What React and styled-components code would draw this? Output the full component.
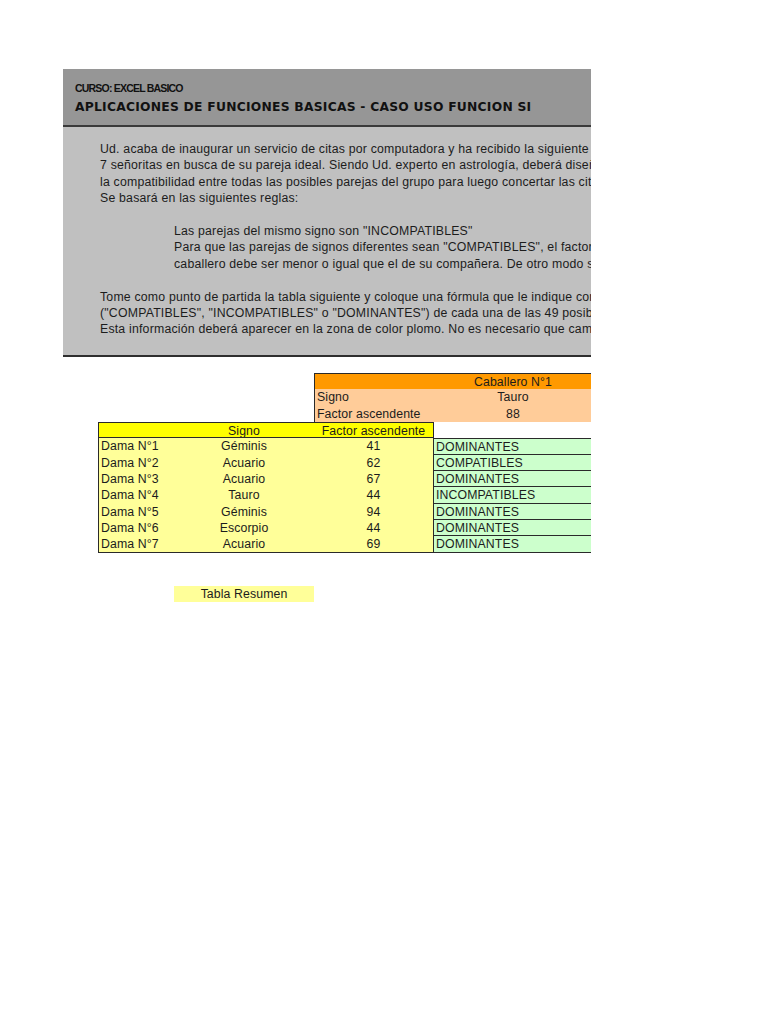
import React from "react";
import styled, { createGlobalStyle } from "styled-components";

const GlobalStyle = createGlobalStyle`
  html, body {
    margin: 0;
    padding: 0;
    background: #ffffff;
  }
  body {
    font-family: "Liberation Sans", Arial, sans-serif;
    color: #1c1c1c;
  }
`;

const Page = styled.div`
  padding: 69px 0 0 63px;
  min-height: 1024px;
  box-sizing: border-box;
`;

const Sheet = styled.div`
  width: 528px;
  overflow: hidden;
`;

const Banner = styled.header`
  background: #969696;
  height: 58px;
  padding: 12px 0 0 12px;
  box-sizing: border-box;
  border-bottom: 2px solid #3a3a3a;
`;

const Course = styled.div`
  font-family: "Liberation Sans Narrow", "Liberation Sans", Arial, sans-serif;
  font-weight: bold;
  font-size: 10.5px;
  letter-spacing: -0.8px;
  line-height: 14px;
  color: #111;
`;

const Title = styled.h1`
  margin: 4px 0 0;
  font-family: "DejaVu Sans", Verdana, sans-serif;
  font-weight: bold;
  font-size: 12.3px;
  letter-spacing: 0.25px;
  line-height: 16px;
  color: #111;
  white-space: nowrap;
`;

const Brief = styled.section`
  background: #c0c0c0;
  height: 230px;
  padding: 14px 0 0 37px;
  box-sizing: border-box;
  border-bottom: 2px solid #2e2e2e;
  font-size: 12.3px;
  letter-spacing: 0.2px;
  line-height: 16.4px;
  white-space: nowrap;
`;

const Para = styled.p`
  margin: 0 0 16.4px;
  padding-left: ${({ $indent }) => ($indent ? "74px" : "0")};
`;

const Grid = styled.div`
  display: grid;
  grid-template-columns: 76px 140px 120px 158px;
  grid-auto-rows: 16.35px;
  margin: 16px 0 0 35px;
  font-size: 12.3px;
  letter-spacing: 0.1px;
  line-height: 16px;
`;

const Cell = styled.div`
  grid-column: ${({ $col }) => $col || "auto"};
  background: ${({ $bg }) => $bg || "transparent"};
  text-align: ${({ $align }) => $align || "center"};
  padding-left: ${({ $align }) => ($align === "left" ? "2px" : "0")};
  border-left: ${({ $bl }) => ($bl ? "1px solid #2a2a2a" : "none")};
  border-right: ${({ $br }) => ($br ? "1px solid #2a2a2a" : "none")};
  border-top: ${({ $bt }) => ($bt ? "1px solid #2a2a2a" : "none")};
  border-bottom: ${({ $bb }) => ($bb ? "1px solid #2a2a2a" : "none")};
  box-sizing: border-box;
  white-space: nowrap;
  overflow: hidden;
`;

const Summary = styled.div`
  margin: 33px 0 0 111px;
  width: 140px;
  height: 16px;
  background: #ffff99;
  text-align: center;
  font-size: 12.3px;
  letter-spacing: 0.1px;
  line-height: 17px;
`;

const ladies = [
  ["Dama N°1", "Géminis", 41, "DOMINANTES"],
  ["Dama N°2", "Acuario", 62, "COMPATIBLES"],
  ["Dama N°3", "Acuario", 67, "DOMINANTES"],
  ["Dama N°4", "Tauro", 44, "INCOMPATIBLES"],
  ["Dama N°5", "Géminis", 94, "DOMINANTES"],
  ["Dama N°6", "Escorpio", 44, "DOMINANTES"],
  ["Dama N°7", "Acuario", 69, "DOMINANTES"],
];

export default function App() {
  const last = ladies.length - 1;
  return (
    <>
      <GlobalStyle />
      <Page>
        <Sheet>
          <Banner>
            <Course>CURSO: EXCEL BASICO</Course>
            <Title>APLICACIONES DE FUNCIONES BASICAS - CASO USO FUNCION SI</Title>
          </Banner>
          <Brief>
            <Para>
              Ud. acaba de inaugurar un servicio de citas por computadora y ha recibido la siguiente información de 7 caballeros y
              <br />
              7 señoritas en busca de su pareja ideal. Siendo Ud. experto en astrología, deberá diseñar una hoja que determine
              <br />
              la compatibilidad entre todas las posibles parejas del grupo para luego concertar las citas.
              <br />
              Se basará en las siguientes reglas:
            </Para>
            <Para $indent>
              Las parejas del mismo signo son "INCOMPATIBLES"
              <br />
              Para que las parejas de signos diferentes sean "COMPATIBLES", el factor ascendente del
              <br />
              caballero debe ser menor o igual que el de su compañera. De otro modo son "DOMINANTES"
            </Para>
            <Para>
              Tome como punto de partida la tabla siguiente y coloque una fórmula que le indique con un mensaje la compatibilidad
              <br />
              ("COMPATIBLES", "INCOMPATIBLES" o "DOMINANTES") de cada una de las 49 posibles parejas.
              <br />
              Esta información deberá aparecer en la zona de color plomo. No es necesario que cambie los datos.
            </Para>
          </Brief>
          <Grid>
            <Cell $col="3" $bg="#ff9900" $bl $bt />
            <Cell $bg="#ff9900" $bt>Caballero N°1</Cell>
            <Cell $col="3" $bg="#ffcc99" $align="left" $bl>Signo</Cell>
            <Cell $bg="#ffcc99">Tauro</Cell>
            <Cell $col="3" $bg="#ffcc99" $align="left" $bl>Factor ascendente</Cell>
            <Cell $bg="#ffcc99">88</Cell>

            <Cell $col="1" $bg="#ffff00" $bl $bt $bb />
            <Cell $bg="#ffff00" $bt $bb>Signo</Cell>
            <Cell $bg="#ffff00" $bt $bb $br>Factor ascendente</Cell>
            <Cell />

            {ladies.map(([name, sign, factor, result], i) => (
              <React.Fragment key={name}>
                <Cell $col="1" $bg="#ffff99" $align="left" $bl $bb={i === last}>{name}</Cell>
                <Cell $bg="#ffff99" $bb={i === last}>{sign}</Cell>
                <Cell $bg="#ffff99" $br $bb={i === last}>{factor}</Cell>
                <Cell $bg="#ccffcc" $align="left" $bt={i === 0} $bb $br>{result}</Cell>
              </React.Fragment>
            ))}
          </Grid>
          <Summary>Tabla Resumen</Summary>
        </Sheet>
      </Page>
    </>
  );
}
